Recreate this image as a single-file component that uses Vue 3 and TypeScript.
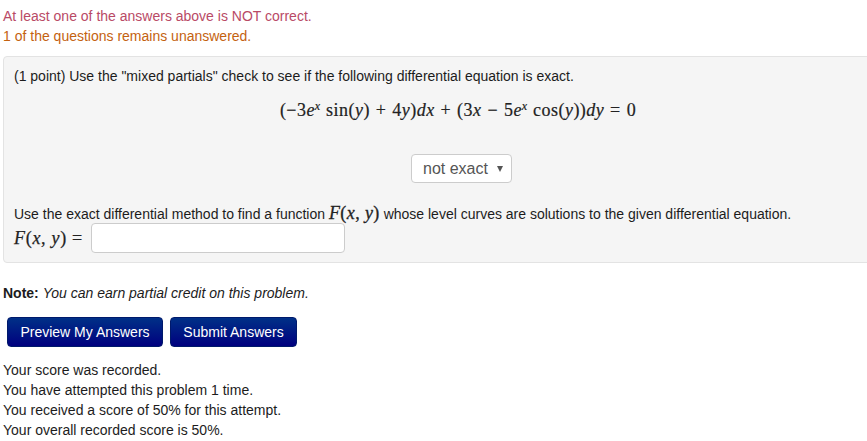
<script setup lang="ts">
const scores: string[] = [
  'Your score was recorded.',
  'You have attempted this problem 1 time.',
  'You received a score of 50% for this attempt.',
  'Your overall recorded score is 50%.',
]
</script>

<template>
  <main class="page">
    <section class="messages">
      <div class="incorrect">At least one of the answers above is NOT correct.</div>
      <div class="unanswered">1 of the questions remains unanswered.</div>
    </section>

    <section class="well">
      <div class="line">(1 point) Use the "mixed partials" check to see if the following differential equation is exact.</div>
      <div class="equation math">
        (−3<i>e</i><sup><i>x</i></sup> sin(<i>y</i>) + 4<i>y</i>)<i>dx</i> + (3<i>x</i> − 5<i>e</i><sup><i>x</i></sup> cos(<i>y</i>))<i>dy</i> = 0
      </div>
      <div class="select-row">
        <div class="select">
          <span>not exact</span>
          <svg class="caret" width="6" height="6" viewBox="0 0 6 6"><path d="M0 0H6L3 6Z" fill="#555" /></svg>
        </div>
      </div>
      <div class="line method">
        Use the exact differential method to find a function
        <span class="math inline-f"><i>F</i>(<i>x</i>, <i>y</i>)</span>
        whose level curves are solutions to the given differential equation.
      </div>
      <div class="answer">
        <span class="math label"><i>F</i>(<i>x</i>, <i>y</i>) =</span>
        <div class="input"></div>
      </div>
    </section>

    <p class="note"><b>Note:</b> <i>You can earn partial credit on this problem.</i></p>

    <div class="buttons">
      <button class="btn preview">Preview My Answers</button>
      <button class="btn submit">Submit Answers</button>
    </div>

    <section class="scores">
      <div v-for="s in scores" :key="s">{{ s }}</div>
    </section>
  </main>
</template>

<style>
html, body { margin: 0; background: #fff; }
</style>

<style scoped>
.page {
  width: 867px;
  height: 441px;
  overflow: hidden;
  box-sizing: border-box;
  padding: 6px 0 0 3px;
  font-family: "Liberation Sans", Arial, sans-serif;
  font-size: 14px;
  line-height: 20px;
  color: #333;
}
.incorrect { color: #b94a66; }
.unanswered { color: #c4620f; }
.well {
  box-sizing: border-box;
  margin-top: 10px;
  width: 920px;
  height: 207px;
  padding: 9px 10px 0;
  background: #f5f5f5;
  border: 1px solid #e3e3e3;
  border-radius: 4px;
  color: #1c1c1c;
}
.math { font-family: "Liberation Serif", serif; color: #222; }
.math i { font-style: italic; }
.equation {
  width: 888px;
  margin-top: 14px;
  text-align: center;
  font-size: 18px;
  line-height: 20px;
  letter-spacing: 0.45px;
  word-spacing: 1px;
  white-space: nowrap;
  -webkit-text-stroke: 0.2px #222;
}
.equation sup { font-size: 12px; line-height: 0; vertical-align: 6px; letter-spacing: 0; }
.select-row { width: 895px; display: flex; justify-content: center; margin-top: 34px; }
.select {
  box-sizing: border-box;
  width: 101px;
  height: 29px;
  display: flex;
  align-items: center;
  padding: 0 8px 0 11px;
  justify-content: space-between;
  background: #fff;
  border: 1px solid #ccc;
  border-radius: 4px;
  font-size: 16px;
  color: #555;
}
.method { margin-top: 20px; white-space: nowrap; }
.inline-f { font-size: 18px; letter-spacing: 0.4px; -webkit-text-stroke: 0.3px #222; }
.answer { display: flex; align-items: center; gap: 4px; height: 30px; margin-top: -1px; }
.label { font-size: 18px; letter-spacing: 0.7px; -webkit-text-stroke: 0.25px #222; width: 73px; white-space: nowrap; }
.input {
  box-sizing: border-box;
  width: 254px;
  height: 30px;
  background: #fff;
  border: 1px solid #ccc;
  border-radius: 4px;
}
.note { margin: 20px 0 0; color: #1c1c1c; }
.buttons { display: flex; gap: 7px; margin: 14px 0 0 4px; }
.btn {
  box-sizing: border-box;
  height: 30px;
  padding: 0;
  border: 1px solid #00196b;
  border-radius: 4px;
  background: linear-gradient(#003087, #00007f);
  color: #fff;
  font: 14px/20px "Liberation Sans", Arial, sans-serif;
}
.preview { width: 156px; }
.submit { width: 127px; }
.scores { margin-top: 13px; color: #1c1c1c; }
</style>
